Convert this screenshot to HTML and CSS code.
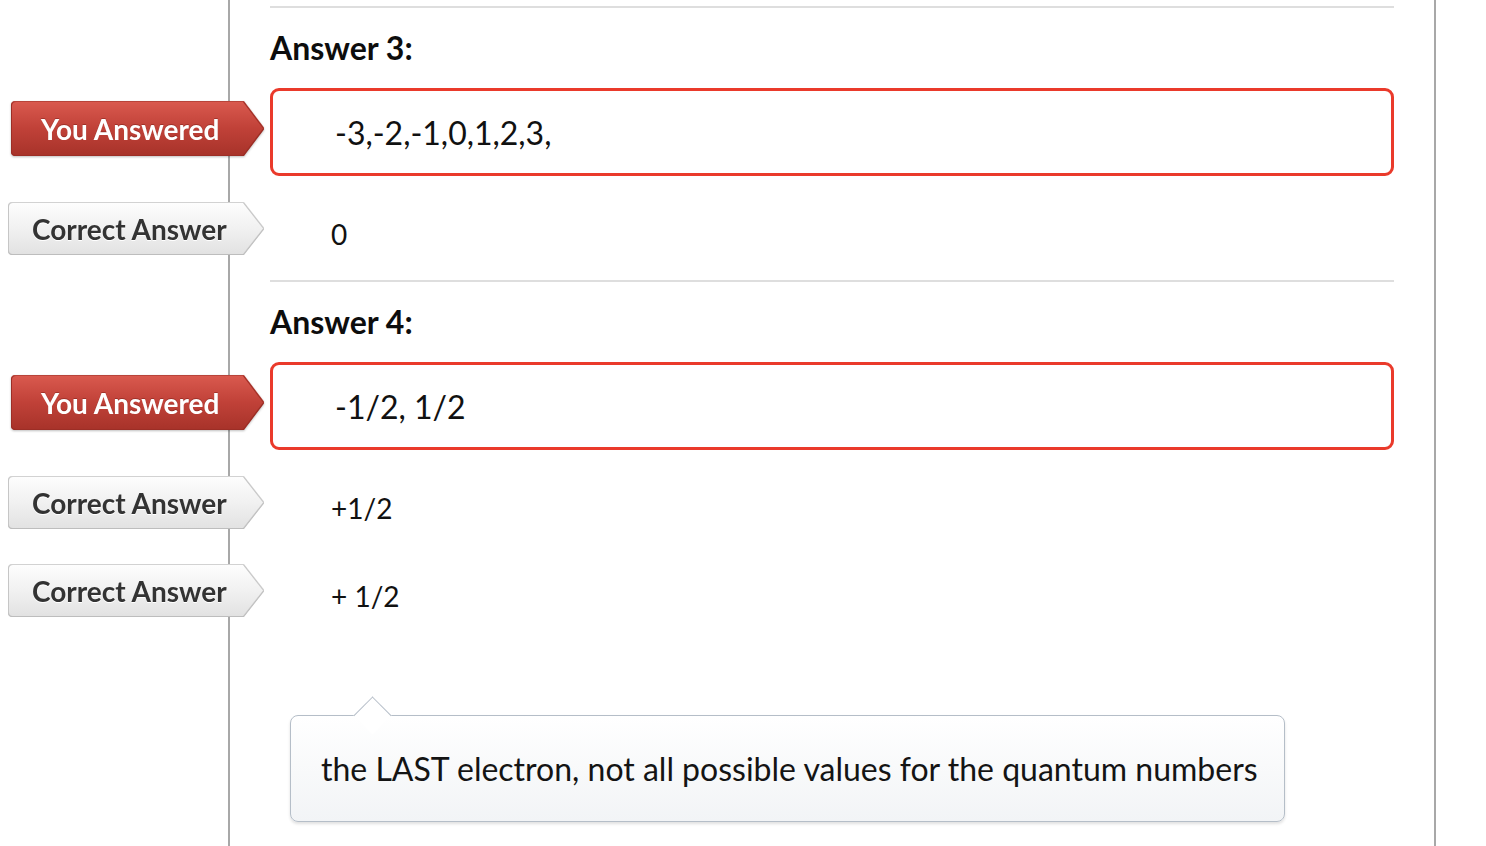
FILE: index.html
```html
<!DOCTYPE html>
<html lang="en">
<head>
<meta charset="utf-8">
<title>Quiz results</title>
<link rel="stylesheet" href="styles.css">
</head>
<body>
<div class="question">
  <div class="answer-group">
    <div class="sep"></div>
    <h3 class="answer-title">Answer 3:</h3>
    <div class="row row-user">
      <div class="tag-wrap tag-red"><div class="tag">You Answered</div></div>
      <div class="answer-box">-3,-2,-1,0,1,2,3,</div>
    </div>
    <div class="row row-correct">
      <div class="tag-wrap tag-grey"><div class="tag">Correct Answer</div></div>
      <div class="answer-text">0</div>
    </div>
  </div>
  <div class="answer-group">
    <div class="sep"></div>
    <h3 class="answer-title">Answer 4:</h3>
    <div class="row row-user">
      <div class="tag-wrap tag-red"><div class="tag">You Answered</div></div>
      <div class="answer-box">-1/2, 1/2</div>
    </div>
    <div class="row row-correct">
      <div class="tag-wrap tag-grey"><div class="tag">Correct Answer</div></div>
      <div class="answer-text">+1/2</div>
    </div>
    <div class="row row-correct">
      <div class="tag-wrap tag-grey"><div class="tag">Correct Answer</div></div>
      <div class="answer-text">+ 1/2</div>
    </div>
  </div>
  <div class="comment">
    <p class="comment-text">the LAST electron, not all possible values for the quantum numbers</p>
  </div>
</div>
</body>
</html>
```
FILE: styles.css
```css
html, body {
  margin: 0;
  padding: 0;
  background: #ffffff;
}
body {
  font-family: Lato, "Open Sans", "Liberation Sans", sans-serif;
  color: #111;
  overflow: hidden;
  height: 846px;
}
.question {
  margin-left: 228px;
  width: 1208px;
  box-sizing: border-box;
  border-left: 2px solid #a8a8a8;
  border-right: 2px solid #a8a8a8;
  min-height: 846px;
  padding: 6px 40px 0 40px;
}
.answer-group + .answer-group {
  margin-top: 16px;
}
.sep {
  height: 2px;
  background: #dedede;
}
.answer-title {
  margin: 22px 0 22px;
  font-size: 32px;
  line-height: 36px;
  font-weight: 700;
  color: #0d0d0d;
}
.row {
  display: flex;
  align-items: flex-start;
}
.row-correct {
  height: 88px;
}
.tag-wrap {
  flex: none;
  margin-right: 7px;
}
.tag {
  height: 100%;
  display: flex;
  align-items: center;
  font-size: 28px;
  font-weight: 700;
  border-radius: 4px 0 0 4px;
  clip-path: polygon(0 0, calc(100% - 20px) 0, 100% 50%, calc(100% - 20px) 100%, 0 100%);
}
.tag-red {
  width: 251px;
  height: 53px;
  margin-left: -258px;
  margin-top: 14px;
  filter: drop-shadow(1px 0 0 #9c2e26) drop-shadow(-1px 0 0 #9c2e26) drop-shadow(0 1px 0 #9c2e26) drop-shadow(0 -1px 0 #b8443a) drop-shadow(0 1px 1px rgba(0,0,0,0.25));
}
.tag-red .tag {
  background: linear-gradient(#d9594e, #c04138 50%, #a8332a);
  color: #fff;
  padding-left: 29px;
  text-shadow: 0 -1px 0 rgba(90, 10, 5, 0.35);
}
.tag-grey {
  width: 254px;
  height: 51px;
  margin-left: -261px;
  margin-top: 27px;
  filter: drop-shadow(1px 0 0 #c6c6c6) drop-shadow(-1px 0 0 #c6c6c6) drop-shadow(0 1px 0 #bdbdbd) drop-shadow(0 -1px 0 #d2d2d2);
}
.tag-grey .tag {
  background: linear-gradient(#fdfdfd, #f1f1f1 50%, #e2e2e2);
  color: #333;
  padding-left: 23px;
  text-shadow: 0 1px 0 #fff;
}
.answer-box {
  flex: 1;
  box-sizing: border-box;
  height: 88px;
  border: 3px solid #ea3a2b;
  border-radius: 9px;
  display: flex;
  align-items: center;
  padding: 2px 0 0 62px;
  font-size: 32px;
  line-height: 36px;
  color: #111;
}
.answer-text {
  padding-left: 61px;
  margin-top: 42px;
  font-size: 28px;
  line-height: 32px;
  color: #111;
}
.comment {
  position: relative;
  margin: 89px 109px 0 20px;
  height: 107px;
  box-sizing: border-box;
  border: 1px solid #b5bec8;
  border-radius: 8px;
  background: linear-gradient(#ffffff, #f2f4f6);
  box-shadow: 0 2px 3px rgba(0, 0, 0, 0.12);
  display: flex;
  align-items: center;
  padding-left: 30px;
}
.comment::before {
  content: "";
  position: absolute;
  left: 68px;
  top: -14px;
  width: 26px;
  height: 26px;
  background: #ffffff;
  border-left: 1px solid #b5bec8;
  border-top: 1px solid #b5bec8;
  transform: rotate(45deg);
}
.comment-text {
  position: relative;
  margin: 0;
  font-size: 32px;
  line-height: 36px;
  color: #141414;
}
```
